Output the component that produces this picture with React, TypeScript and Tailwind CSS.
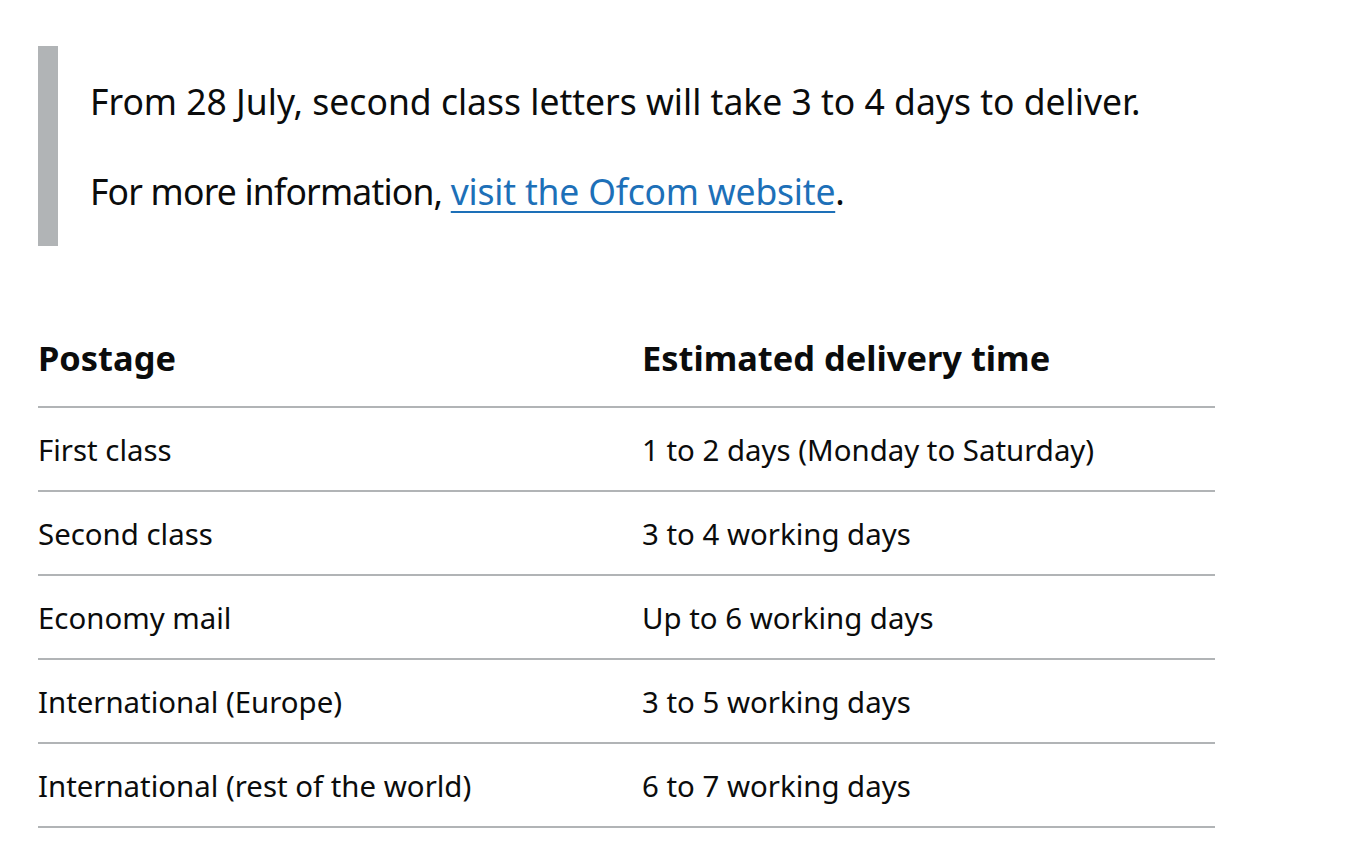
import React from "react";

const rows: [string, string][] = [
  ["First class", "1 to 2 days (Monday to Saturday)"],
  ["Second class", "3 to 4 working days"],
  ["Economy mail", "Up to 6 working days"],
  ["International (Europe)", "3 to 5 working days"],
  ["International (rest of the world)", "6 to 7 working days"],
];

export default function App() {
  return (
    <div
      className="min-h-[858px] w-full bg-white pl-[38px] pt-[46px] text-[#0b0c0c]"
      style={{ fontFamily: '"Noto Sans", Arial, sans-serif' }}
    >
      <div className="w-[1177px]">
        <div className="border-l-[20px] border-[#b1b4b6] pl-[32px] py-[30px] text-[35.5px] leading-[50px]">
          <p>From 28 July, second class letters will take 3 to 4 days to deliver.</p>
          <p className="mt-[40px]">
            <span className="tracking-[-0.8px]">For more information, </span>
            <a href="#" className="text-[#1d70b8] tracking-[-0.2px] underline decoration-[2px] underline-offset-[6px]">
              visit the Ofcom website
            </a>
            .
          </p>
        </div>
        <div className="mt-[78px]">
          <div className="grid grid-cols-[604px_1fr] h-[84px] pb-[14px] items-center border-b-2 border-[#b1b4b6] text-[34.4px] font-bold">
            <div>Postage</div>
            <div>Estimated delivery time</div>
          </div>
          {rows.map(([a, b]) => (
            <div
              key={a}
              className="grid grid-cols-[604px_1fr] h-[84px] pt-[2px] items-center border-b-2 border-[#b1b4b6] text-[29.4px]"
            >
              <div>{a}</div>
              <div>{b}</div>
            </div>
          ))}
        </div>
      </div>
    </div>
  );
}
